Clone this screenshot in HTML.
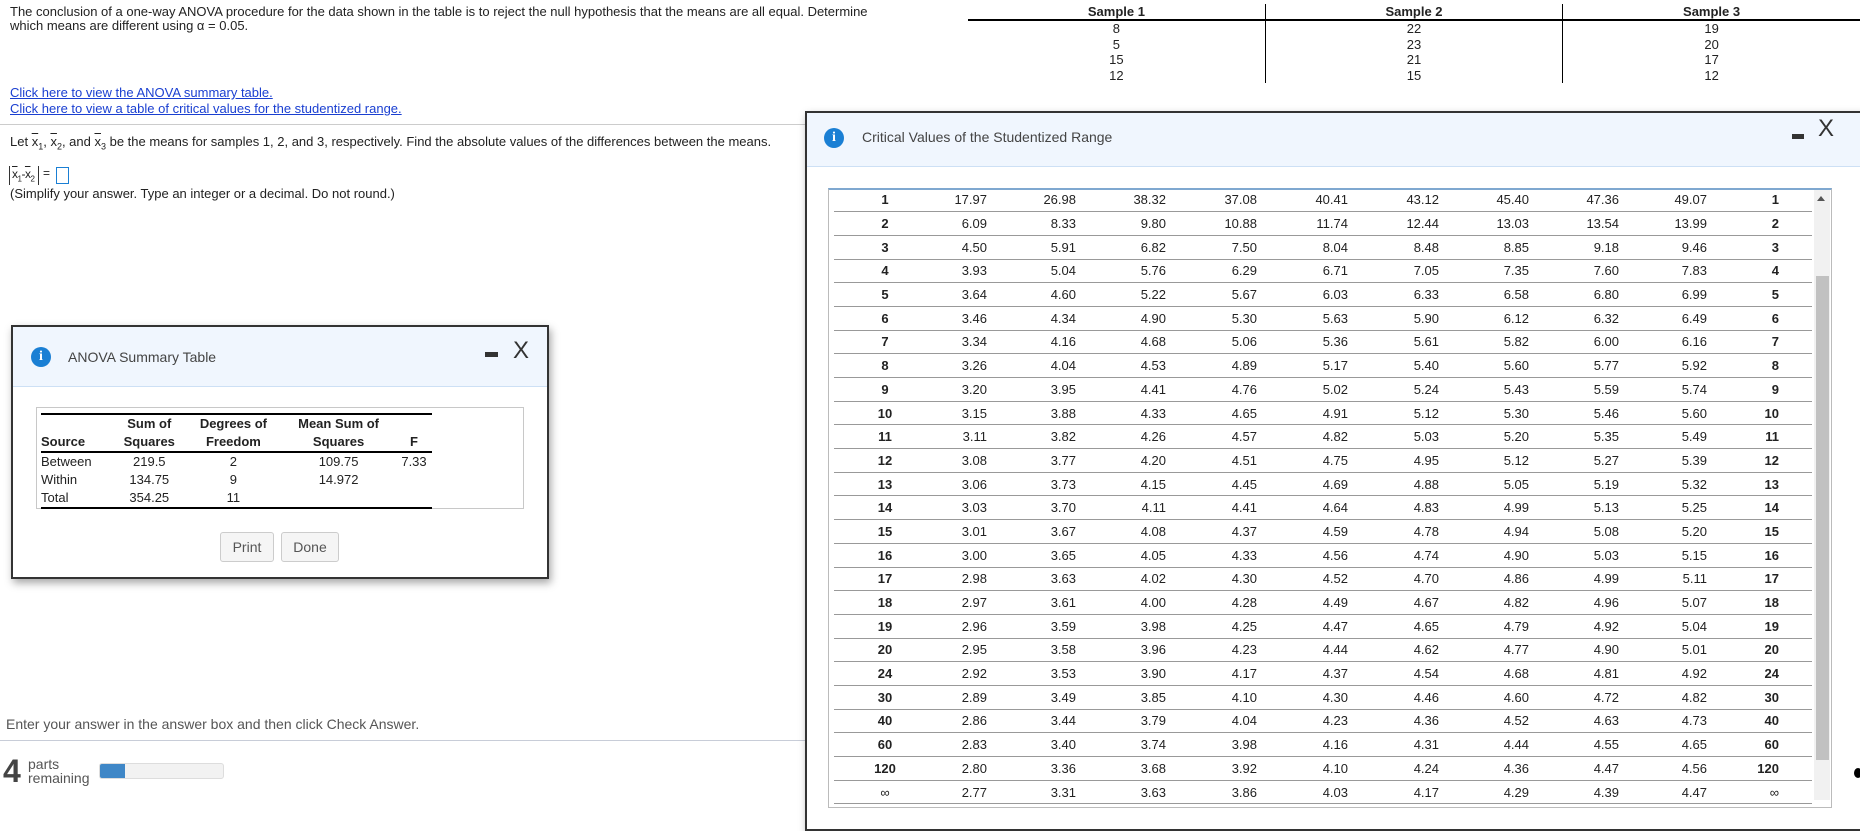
<!DOCTYPE html>
<html><head><meta charset="utf-8">
<style>
*{margin:0;padding:0;box-sizing:border-box}
body{width:1860px;height:800px;overflow:hidden;background:#fff;font-family:"Liberation Sans",Arial,sans-serif;color:#222;position:relative;font-size:13px}
.a{position:absolute;white-space:nowrap}
a{color:#1a3fd1;text-decoration:underline}
.ov{text-decoration:overline}
.samp{position:absolute;left:968px;top:4px;border-collapse:collapse;font-size:13px}
.samp td{width:298px;text-align:center;line-height:15.6px;padding:0}
.samp th{font-weight:bold;line-height:15px;border-bottom:2px solid #000;padding:0}
.samp td+td,.samp th+th{border-left:1px solid #000}
.dlg{position:absolute;border:2px solid #333;background:#fff;box-shadow:2px 4px 8px rgba(0,0,0,.35)}
.hdr{background:#f0f6fe;border-bottom:1px solid #cde0f5;position:absolute;left:0;right:0;top:0}
.ic{position:absolute;width:20px;height:20px;border-radius:50%;background:#1a7fd4;color:#fff;font:bold 14px "Liberation Serif",serif;text-align:center;line-height:20px}
.an{position:absolute;left:41px;top:413px;border-collapse:collapse;font-size:13px;width:391px}
.an th,.an td{padding:0;line-height:18px;text-align:center}
.btn{position:absolute;border:1px solid #ccc;border-radius:3px;background:#f5f5f5;color:#555;font-size:14px;text-align:center;line-height:28px}
.cv{position:absolute;left:834px;top:188px;border-collapse:collapse;font-size:13px;table-layout:fixed}
.cv td{height:23.7px;border-bottom:1px solid #999;text-align:right;padding:0;color:#222}
.cv td.l{text-align:center;font-weight:bold}
.cv td.r{font-weight:bold;padding-right:33px}
</style></head><body>

<div class="a" style="left:10px;top:5px;line-height:14px">The conclusion of a one-way ANOVA procedure for the data shown in the table is to reject the null hypothesis that the means are all equal. Determine<br>which means are different using α = 0.05.</div>

<table class="samp">
<tr><th>Sample 1</th><th>Sample 2</th><th>Sample 3</th></tr>
<tr><td>8</td><td>22</td><td>19</td></tr>
<tr><td>5</td><td>23</td><td>20</td></tr>
<tr><td>15</td><td>21</td><td>17</td></tr>
<tr><td>12</td><td>15</td><td>12</td></tr>
</table>

<div class="a" style="left:10px;top:85px;line-height:16px"><a>Click here to view the ANOVA summary table.</a><br><a>Click here to view a table of critical values for the studentized range.</a></div>
<div class="a" style="left:0;top:124px;width:806px;height:1px;background:#ccc"></div>
<div class="a" style="left:10px;top:134px">Let <span class="ov">x</span><sub style="font-size:9px">1</sub>, <span class="ov">x</span><sub style="font-size:9px">2</sub>, and <span class="ov">x</span><sub style="font-size:9px">3</sub> be the means for samples 1, 2, and 3, respectively. Find the absolute values of the differences between the means.</div>
<div class="a" style="left:9px;top:166px;width:30px;height:19px;border-left:1px solid #333;border-right:1px solid #333;font-size:12px;line-height:17px;padding-left:2px;letter-spacing:-0.5px"><span class="ov">x</span><sub style="font-size:8px">1</sub>-<span class="ov">x</span><sub style="font-size:8px">2</sub></div>
<div class="a" style="left:43px;top:166px;font-size:12px">=</div>
<div class="a" style="left:56px;top:167px;width:13px;height:17px;border:1px solid #1a7fd4"></div>
<div class="a" style="left:10px;top:186px">(Simplify your answer. Type an integer or a decimal. Do not round.)</div>

<div class="a" style="left:6px;top:716px;font-size:14px;color:#555">Enter your answer in the answer box and then click Check Answer.</div>
<div class="a" style="left:0;top:740px;width:806px;height:1px;background:#c8cdd8"></div>
<div class="a" style="left:3px;top:755px;font-size:32px;font-weight:bold;color:#444;line-height:32px">4</div>
<div class="a" style="left:28px;top:757px;font-size:14px;color:#555;line-height:14px">parts<br>remaining</div>
<div class="a" style="left:99px;top:763px;width:125px;height:16px;border:1px solid #ddd;border-radius:3px;background:#f2f2f2;overflow:hidden"><div style="width:25px;height:100%;background:#3f87c7"></div></div>

<!-- ANOVA dialog -->
<div class="dlg" style="left:11px;top:325px;width:538px;height:254px">
<div class="hdr" style="height:60px"></div>
<div class="ic" style="left:18px;top:20px">i</div>
<div class="a" style="left:55px;top:22px;font-size:14px;color:#444">ANOVA Summary Table</div>
<div class="a" style="left:472px;top:25px;width:13px;height:5px;background:#333"></div>
<div class="a" style="left:500px;top:10px;font-size:24px;color:#333">X</div>
<div class="btn" style="left:207px;top:205px;width:54px;height:30px">Print</div>
<div class="btn" style="left:268px;top:205px;width:58px;height:30px">Done</div>
</div>
<div class="a" style="left:36px;top:407px;width:488px;height:102px;border:1px solid #c8c8c8"></div>
<table class="an">
<tr style="border-top:2px solid #000"><th style="text-align:left;vertical-align:bottom">Source</th><th>Sum of<br>Squares</th><th>Degrees of<br>Freedom</th><th>Mean Sum of<br>Squares</th><th style="vertical-align:bottom">F</th></tr>
<tr style="border-top:2px solid #000"><td style="text-align:left">Between</td><td>219.5</td><td>2</td><td>109.75</td><td>7.33</td></tr>
<tr><td style="text-align:left">Within</td><td>134.75</td><td>9</td><td>14.972</td><td></td></tr>
<tr style="border-bottom:2px solid #000"><td style="text-align:left">Total</td><td>354.25</td><td>11</td><td></td><td></td></tr>
</table>

<!-- Critical values dialog -->
<div class="dlg" style="left:805px;top:111px;width:1100px;height:720px">
<div class="hdr" style="height:54px"></div>
<div class="ic" style="left:17px;top:15px">i</div>
<div class="a" style="left:55px;top:16px;font-size:14px;color:#444">Critical Values of the Studentized Range</div>
<div class="a" style="left:985px;top:21px;width:12px;height:5px;background:#333"></div>
<div class="a" style="left:1011px;top:2px;font-size:24px;color:#333">X</div>
</div>
<div class="a" style="left:828px;top:188px;width:1004px;height:620px;border:1px solid #bbb;border-top:2px solid #7fa8d0"></div>
<div class="a" style="left:1814px;top:190px;width:16px;height:610px;background:#f1f1f1"></div>
<div class="a" style="left:1816px;top:276px;width:13px;height:484px;background:#c1c1c1"></div>
<div class="a" style="left:1817px;top:196px;width:0;height:0;border-left:4px solid transparent;border-right:4px solid transparent;border-bottom:5px solid #555"></div>
<div class="a" style="left:1854px;top:768px;width:8px;height:10px;border-radius:50%;background:#000"></div>

<table class="cv">
<colgroup><col style="width:102px"><col style="width:51px"><col style="width:89px"><col style="width:90px"><col style="width:91px"><col style="width:91px"><col style="width:91px"><col style="width:90px"><col style="width:90px"><col style="width:88px"><col style="width:105px"></colgroup>
<tr><td class="l">1</td><td>17.97</td><td>26.98</td><td>38.32</td><td>37.08</td><td>40.41</td><td>43.12</td><td>45.40</td><td>47.36</td><td>49.07</td><td class="r">1</td></tr>
<tr><td class="l">2</td><td>6.09</td><td>8.33</td><td>9.80</td><td>10.88</td><td>11.74</td><td>12.44</td><td>13.03</td><td>13.54</td><td>13.99</td><td class="r">2</td></tr>
<tr><td class="l">3</td><td>4.50</td><td>5.91</td><td>6.82</td><td>7.50</td><td>8.04</td><td>8.48</td><td>8.85</td><td>9.18</td><td>9.46</td><td class="r">3</td></tr>
<tr><td class="l">4</td><td>3.93</td><td>5.04</td><td>5.76</td><td>6.29</td><td>6.71</td><td>7.05</td><td>7.35</td><td>7.60</td><td>7.83</td><td class="r">4</td></tr>
<tr><td class="l">5</td><td>3.64</td><td>4.60</td><td>5.22</td><td>5.67</td><td>6.03</td><td>6.33</td><td>6.58</td><td>6.80</td><td>6.99</td><td class="r">5</td></tr>
<tr><td class="l">6</td><td>3.46</td><td>4.34</td><td>4.90</td><td>5.30</td><td>5.63</td><td>5.90</td><td>6.12</td><td>6.32</td><td>6.49</td><td class="r">6</td></tr>
<tr><td class="l">7</td><td>3.34</td><td>4.16</td><td>4.68</td><td>5.06</td><td>5.36</td><td>5.61</td><td>5.82</td><td>6.00</td><td>6.16</td><td class="r">7</td></tr>
<tr><td class="l">8</td><td>3.26</td><td>4.04</td><td>4.53</td><td>4.89</td><td>5.17</td><td>5.40</td><td>5.60</td><td>5.77</td><td>5.92</td><td class="r">8</td></tr>
<tr><td class="l">9</td><td>3.20</td><td>3.95</td><td>4.41</td><td>4.76</td><td>5.02</td><td>5.24</td><td>5.43</td><td>5.59</td><td>5.74</td><td class="r">9</td></tr>
<tr><td class="l">10</td><td>3.15</td><td>3.88</td><td>4.33</td><td>4.65</td><td>4.91</td><td>5.12</td><td>5.30</td><td>5.46</td><td>5.60</td><td class="r">10</td></tr>
<tr><td class="l">11</td><td>3.11</td><td>3.82</td><td>4.26</td><td>4.57</td><td>4.82</td><td>5.03</td><td>5.20</td><td>5.35</td><td>5.49</td><td class="r">11</td></tr>
<tr><td class="l">12</td><td>3.08</td><td>3.77</td><td>4.20</td><td>4.51</td><td>4.75</td><td>4.95</td><td>5.12</td><td>5.27</td><td>5.39</td><td class="r">12</td></tr>
<tr><td class="l">13</td><td>3.06</td><td>3.73</td><td>4.15</td><td>4.45</td><td>4.69</td><td>4.88</td><td>5.05</td><td>5.19</td><td>5.32</td><td class="r">13</td></tr>
<tr><td class="l">14</td><td>3.03</td><td>3.70</td><td>4.11</td><td>4.41</td><td>4.64</td><td>4.83</td><td>4.99</td><td>5.13</td><td>5.25</td><td class="r">14</td></tr>
<tr><td class="l">15</td><td>3.01</td><td>3.67</td><td>4.08</td><td>4.37</td><td>4.59</td><td>4.78</td><td>4.94</td><td>5.08</td><td>5.20</td><td class="r">15</td></tr>
<tr><td class="l">16</td><td>3.00</td><td>3.65</td><td>4.05</td><td>4.33</td><td>4.56</td><td>4.74</td><td>4.90</td><td>5.03</td><td>5.15</td><td class="r">16</td></tr>
<tr><td class="l">17</td><td>2.98</td><td>3.63</td><td>4.02</td><td>4.30</td><td>4.52</td><td>4.70</td><td>4.86</td><td>4.99</td><td>5.11</td><td class="r">17</td></tr>
<tr><td class="l">18</td><td>2.97</td><td>3.61</td><td>4.00</td><td>4.28</td><td>4.49</td><td>4.67</td><td>4.82</td><td>4.96</td><td>5.07</td><td class="r">18</td></tr>
<tr><td class="l">19</td><td>2.96</td><td>3.59</td><td>3.98</td><td>4.25</td><td>4.47</td><td>4.65</td><td>4.79</td><td>4.92</td><td>5.04</td><td class="r">19</td></tr>
<tr><td class="l">20</td><td>2.95</td><td>3.58</td><td>3.96</td><td>4.23</td><td>4.44</td><td>4.62</td><td>4.77</td><td>4.90</td><td>5.01</td><td class="r">20</td></tr>
<tr><td class="l">24</td><td>2.92</td><td>3.53</td><td>3.90</td><td>4.17</td><td>4.37</td><td>4.54</td><td>4.68</td><td>4.81</td><td>4.92</td><td class="r">24</td></tr>
<tr><td class="l">30</td><td>2.89</td><td>3.49</td><td>3.85</td><td>4.10</td><td>4.30</td><td>4.46</td><td>4.60</td><td>4.72</td><td>4.82</td><td class="r">30</td></tr>
<tr><td class="l">40</td><td>2.86</td><td>3.44</td><td>3.79</td><td>4.04</td><td>4.23</td><td>4.36</td><td>4.52</td><td>4.63</td><td>4.73</td><td class="r">40</td></tr>
<tr><td class="l">60</td><td>2.83</td><td>3.40</td><td>3.74</td><td>3.98</td><td>4.16</td><td>4.31</td><td>4.44</td><td>4.55</td><td>4.65</td><td class="r">60</td></tr>
<tr><td class="l">120</td><td>2.80</td><td>3.36</td><td>3.68</td><td>3.92</td><td>4.10</td><td>4.24</td><td>4.36</td><td>4.47</td><td>4.56</td><td class="r">120</td></tr>
<tr><td class="l" style="font-weight:normal">∞</td><td>2.77</td><td>3.31</td><td>3.63</td><td>3.86</td><td>4.03</td><td>4.17</td><td>4.29</td><td>4.39</td><td>4.47</td><td class="r" style="font-weight:normal">∞</td></tr>
</table>
</body></html>
